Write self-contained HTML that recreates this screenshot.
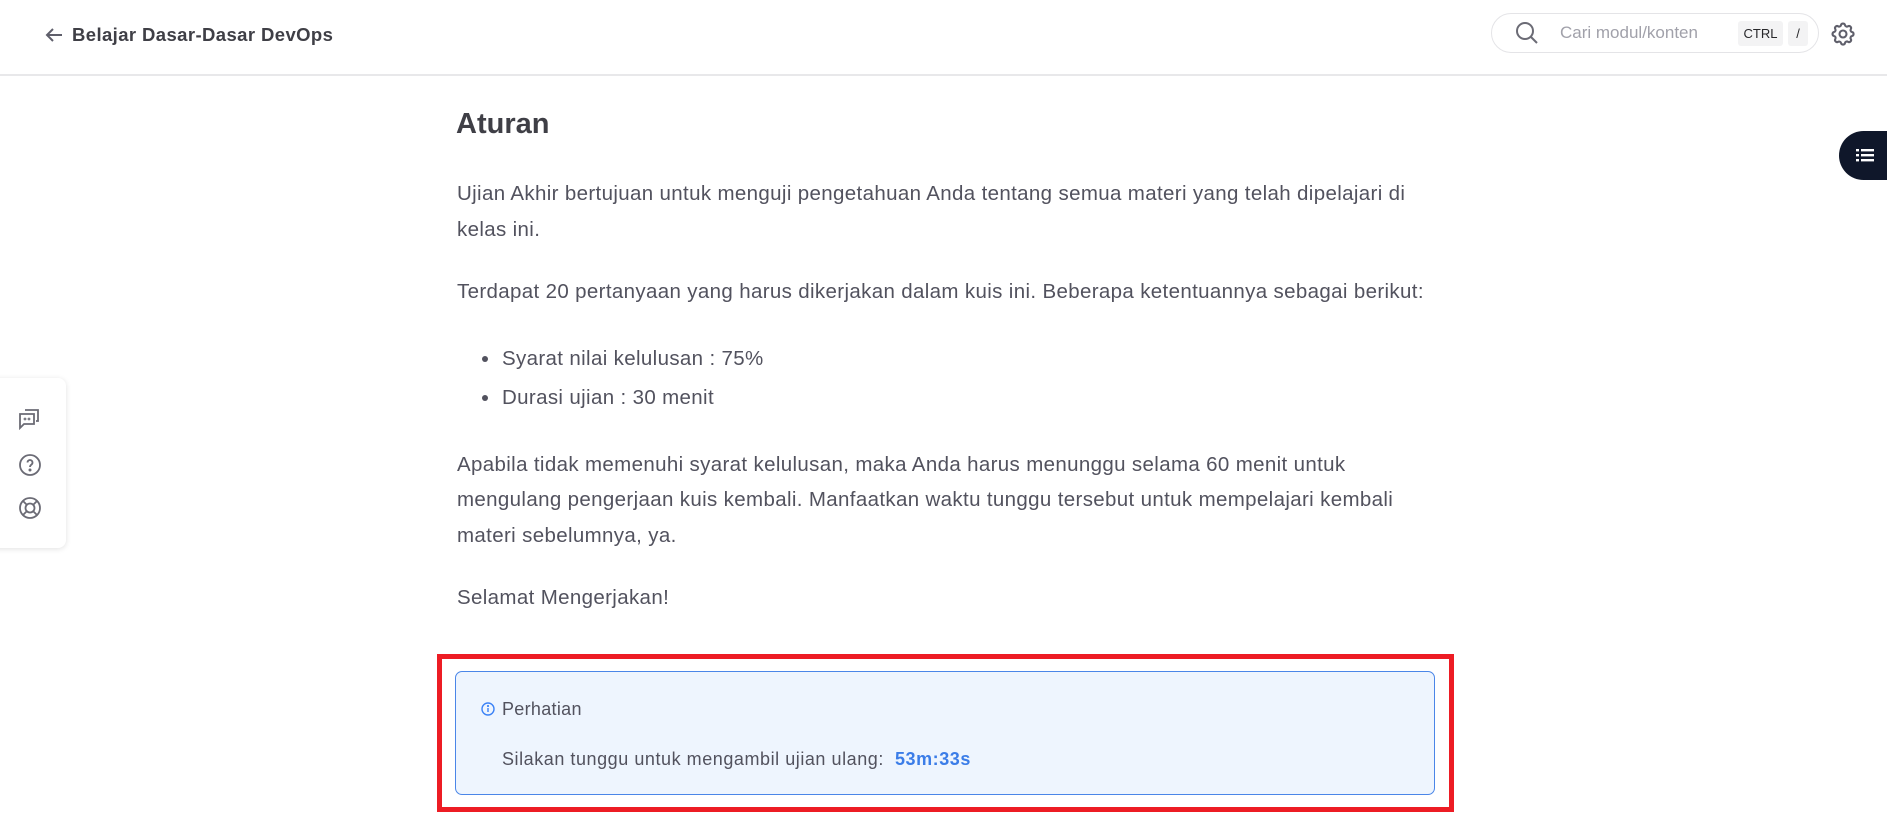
<!DOCTYPE html>
<html><head><meta charset="utf-8"><style>
*{margin:0;padding:0;box-sizing:border-box}
body{width:1887px;height:827px;overflow:hidden;background:#fff;font-family:"Liberation Sans",sans-serif;color:#52525e;position:relative}
.a{position:absolute;white-space:nowrap}
.t{font-size:20.5px;letter-spacing:.35px;line-height:24px}
</style></head><body>
<div class="a" style="left:0;top:74px;width:1887px;height:2px;background:#e8e8ea"></div>
<svg class="a" style="left:44px;top:26px" width="20" height="18" viewBox="0 0 20 18"><path d="M18 9H3M9 3L3 9l6 6" fill="none" stroke="#5f5f6b" stroke-width="2"/></svg>
<div class="a" style="left:72px;top:23px;font-size:18.5px;font-weight:bold;color:#3f3f46;line-height:24px;letter-spacing:.4px">Belajar Dasar-Dasar DevOps</div>

<div class="a" style="left:1491px;top:13px;width:328px;height:40px;border:1px solid #e4e4e7;border-radius:20px"></div>
<svg class="a" style="left:1514px;top:20px" width="26" height="26" viewBox="0 0 26 26"><circle cx="11" cy="11" r="8" fill="none" stroke="#6b6b75" stroke-width="2"/><path d="M17 17l6 6" stroke="#6b6b75" stroke-width="2"/></svg>
<div class="a" style="left:1560px;top:22px;font-size:17px;color:#a1a1aa;line-height:22px">Cari modul/konten</div>
<div class="a" style="left:1738px;top:21px;width:45px;height:25px;background:#f3f3f4;border-radius:3px;font-size:13px;color:#27272a;text-align:center;line-height:25px">CTRL</div>
<div class="a" style="left:1788px;top:21px;width:20px;height:25px;background:#f3f3f4;border-radius:3px;font-size:13px;color:#27272a;text-align:center;line-height:25px">/</div>
<svg class="a" style="left:1829px;top:20px" width="28" height="28" viewBox="0 0 24 24" fill="none" stroke="#5f5f6b" stroke-width="1.8"><path d="M10.3 4.3c.4-1.7 2.9-1.7 3.4 0a1.7 1.7 0 002.6 1.1c1.5-.9 3.3.8 2.4 2.4a1.7 1.7 0 001 2.5c1.8.4 1.8 2.9 0 3.4a1.7 1.7 0 00-1 2.6c.9 1.5-.9 3.300-2.4 2.4a1.7 1.7 0 00-2.6 1c-.4 1.8-2.9 1.8-3.4 0a1.7 1.7 0 00-2.5-1c-1.5.9-3.3-.9-2.4-2.4a1.7 1.7 0 00-1.1-2.6c-1.7-.4-1.700-2.9 0-3.4a1.7 1.7 0 001.1-2.5c-.9-1.5.9-3.3 2.4-2.4 1 .6 2.3.1 2.5-1.1z"/><circle cx="12" cy="12" r="3"/></svg>

<div class="a" style="left:1839px;top:131px;width:60px;height:49px;background:#0f172a;border-radius:25px 0 0 25px"></div>
<svg class="a" style="left:1856px;top:148px" width="18" height="14" viewBox="0 0 18 14" fill="#fff"><rect x="0" y="1" width="3" height="2.4"/><rect x="5" y="1" width="13" height="2.4"/><rect x="0" y="6" width="3" height="2.4"/><rect x="5" y="6" width="13" height="2.4"/><rect x="0" y="11" width="3" height="2.4"/><rect x="5" y="11" width="13" height="2.4"/></svg>

<div class="a" style="left:-10px;top:378px;width:76px;height:170px;background:#fff;border-radius:8px;box-shadow:0 1px 6px rgba(0,0,0,.12)"></div>
<svg class="a" style="left:18px;top:406px" width="24" height="24" viewBox="0 0 24 24" fill="none" stroke="#6b6b75" stroke-width="1.8"><path d="M7 4h13v11h-2"/><path d="M2 8h14v10H6l-4 4z"/><circle cx="7" cy="13" r=".5"/><circle cx="11" cy="13" r=".5"/></svg>
<svg class="a" style="left:18px;top:453px" width="24" height="24" viewBox="0 0 24 24" fill="none" stroke="#6b6b75" stroke-width="1.8"><circle cx="12" cy="12" r="10"/><path d="M9.5 9.5a2.5 2.5 0 114 2c-1 .7-1.5 1.2-1.5 2.5"/><circle cx="12" cy="17" r=".6" fill="#6b6b75"/></svg>
<svg class="a" style="left:18px;top:496px" width="24" height="24" viewBox="0 0 24 24" fill="none" stroke="#6b6b75" stroke-width="1.8"><circle cx="12" cy="12" r="10"/><circle cx="12" cy="12" r="4.5"/><path d="M5 5l4 4M19 5l-4 4M5 19l4-4M19 19l-4-4"/></svg>

<div class="a" style="left:456px;top:106px;font-size:29px;font-weight:bold;color:#3f3f46;line-height:36px">Aturan</div>
<div class="a t" style="left:457px;top:182px">Ujian Akhir bertujuan untuk menguji pengetahuan Anda tentang semua materi yang telah dipelajari di</div>
<div class="a t" style="left:457px;top:218px">kelas ini.</div>
<div class="a t" style="left:457px;top:280px">Terdapat 20 pertanyaan yang harus dikerjakan dalam kuis ini. Beberapa ketentuannya sebagai berikut:</div>
<div class="a" style="left:482px;top:356px;width:6px;height:6px;border-radius:50%;background:#52525e"></div>
<div class="a t" style="left:502px;top:347px">Syarat nilai kelulusan : 75%</div>
<div class="a" style="left:482px;top:395px;width:6px;height:6px;border-radius:50%;background:#52525e"></div>
<div class="a t" style="left:502px;top:386px">Durasi ujian : 30 menit</div>
<div class="a t" style="left:457px;top:453px">Apabila tidak memenuhi syarat kelulusan, maka Anda harus menunggu selama 60 menit untuk</div>
<div class="a t" style="left:457px;top:488px">mengulang pengerjaan kuis kembali. Manfaatkan waktu tunggu tersebut untuk mempelajari kembali</div>
<div class="a t" style="left:457px;top:524px">materi sebelumnya, ya.</div>
<div class="a t" style="left:457px;top:586px">Selamat Mengerjakan!</div>

<div class="a" style="left:437px;top:654px;width:1017px;height:158px;border:5px solid #ed1c24"></div>
<div class="a" style="left:455px;top:671px;width:980px;height:124px;background:#eef5fe;border:1px solid #4a86e8;border-radius:7px"></div>
<svg class="a" style="left:481px;top:702px" width="14" height="14" viewBox="0 0 14 14" fill="none" stroke="#3b82f6" stroke-width="1.4"><circle cx="7" cy="7" r="6"/><path d="M7 6v4"/><circle cx="7" cy="4" r=".4" fill="#3b82f6"/></svg>
<div class="a" style="left:502px;top:698px;font-size:18px;color:#52525e;line-height:22px;letter-spacing:.3px">Perhatian</div>
<div class="a" style="left:502px;top:748px;font-size:18px;color:#52525e;line-height:22px;letter-spacing:.55px">Silakan tunggu untuk mengambil ujian ulang:&nbsp; <b style="color:#3b7de8">53m:33s</b></div>
</body></html>
